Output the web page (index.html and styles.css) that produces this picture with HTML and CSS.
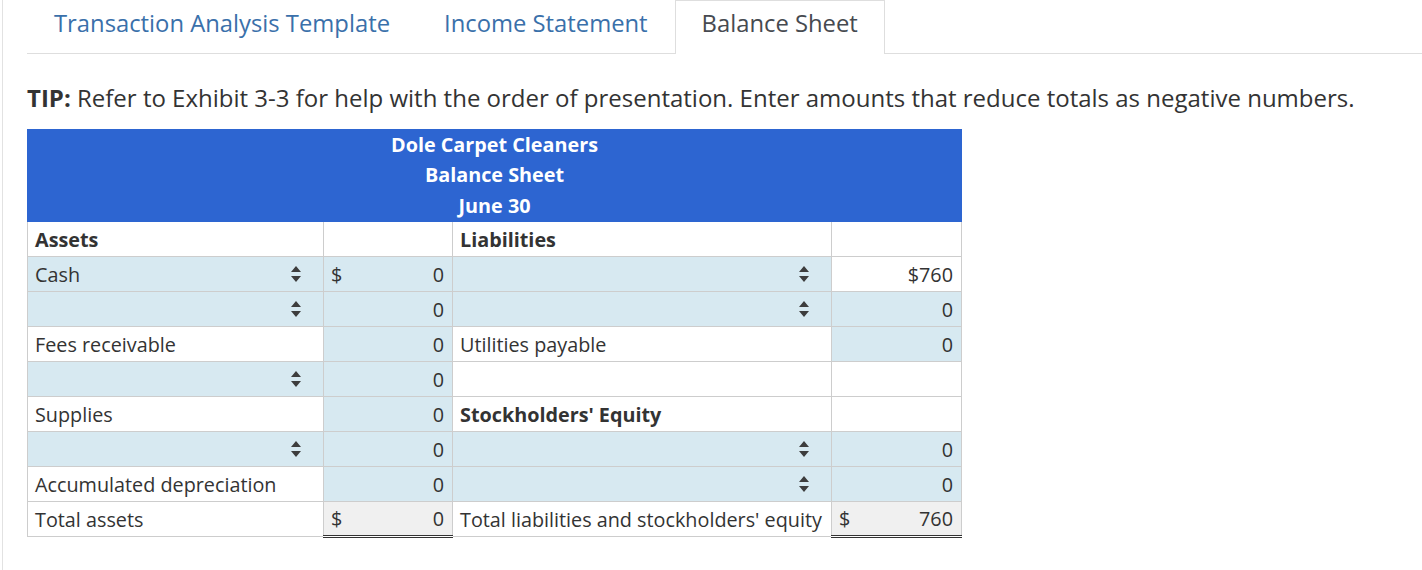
FILE: index.html
```html
<!DOCTYPE html>
<html>
<head>
<meta charset="utf-8">
<link rel="stylesheet" href="styles.css">
</head>
<body>
<div class="page">
  <nav class="tabs">
    <a class="tab">Transaction Analysis Template</a>
    <a class="tab">Income Statement</a>
    <a class="tab active">Balance Sheet</a>
  </nav>
  <p class="tip"><b>TIP:</b> Refer to Exhibit 3-3 for help with the order of presentation. Enter amounts that reduce totals as negative numbers.</p>
  <table class="bs">
    <colgroup>
      <col class="c1"><col class="c2"><col class="c3"><col class="c4">
    </colgroup>
    <tr><th class="head" colspan="4">Dole Carpet Cleaners<br>Balance Sheet<br>June 30</th></tr>
    <tr>
      <td class="lbl b">Assets</td><td></td>
      <td class="lbl b">Liabilities</td><td></td>
    </tr>
    <tr>
      <td class="sel"><span class="stxt">Cash</span><svg class="arr" viewBox="0 0 10 16"><path d="M5 0L10 6H0Z M0 10H10L5 16Z"/></svg></td>
      <td class="inp"><span class="dol">$</span><span>0</span></td>
      <td class="sel"><span class="stxt"></span><svg class="arr" viewBox="0 0 10 16"><path d="M5 0L10 6H0Z M0 10H10L5 16Z"/></svg></td>
      <td class="num">$760</td>
    </tr>
    <tr>
      <td class="sel"><span class="stxt"></span><svg class="arr" viewBox="0 0 10 16"><path d="M5 0L10 6H0Z M0 10H10L5 16Z"/></svg></td>
      <td class="inp"><span></span><span>0</span></td>
      <td class="sel"><span class="stxt"></span><svg class="arr" viewBox="0 0 10 16"><path d="M5 0L10 6H0Z M0 10H10L5 16Z"/></svg></td>
      <td class="inp"><span></span><span>0</span></td>
    </tr>
    <tr>
      <td class="lbl">Fees receivable</td>
      <td class="inp"><span></span><span>0</span></td>
      <td class="lbl">Utilities payable</td>
      <td class="inp"><span></span><span>0</span></td>
    </tr>
    <tr>
      <td class="sel"><span class="stxt"></span><svg class="arr" viewBox="0 0 10 16"><path d="M5 0L10 6H0Z M0 10H10L5 16Z"/></svg></td>
      <td class="inp"><span></span><span>0</span></td>
      <td class="lbl"></td>
      <td></td>
    </tr>
    <tr>
      <td class="lbl">Supplies</td>
      <td class="inp"><span></span><span>0</span></td>
      <td class="lbl b">Stockholders' Equity</td>
      <td></td>
    </tr>
    <tr>
      <td class="sel"><span class="stxt"></span><svg class="arr" viewBox="0 0 10 16"><path d="M5 0L10 6H0Z M0 10H10L5 16Z"/></svg></td>
      <td class="inp"><span></span><span>0</span></td>
      <td class="sel"><span class="stxt"></span><svg class="arr" viewBox="0 0 10 16"><path d="M5 0L10 6H0Z M0 10H10L5 16Z"/></svg></td>
      <td class="inp"><span></span><span>0</span></td>
    </tr>
    <tr>
      <td class="lbl">Accumulated depreciation</td>
      <td class="inp"><span></span><span>0</span></td>
      <td class="sel"><span class="stxt"></span><svg class="arr" viewBox="0 0 10 16"><path d="M5 0L10 6H0Z M0 10H10L5 16Z"/></svg></td>
      <td class="inp"><span></span><span>0</span></td>
    </tr>
    <tr class="total">
      <td class="lbl">Total assets</td>
      <td class="tot"><span class="dol">$</span><span>0</span></td>
      <td class="lbl">Total liabilities and stockholders' equity</td>
      <td class="tot"><span class="dol">$</span><span>760</span></td>
    </tr>
  </table>
</div>
</body>
</html>
```

FILE: styles.css
```css
html, body {
  margin: 0;
  padding: 0;
  background: #fff;
}
body {
  font-family: "Open Sans", "Liberation Sans", sans-serif;
  color: #333;
}
.page {
  margin-left: 2px;
  border-left: 1px solid #e2e2e2;
  min-height: 570px;
  padding-left: 24px;
  box-sizing: border-box;
}
.tabs {
  display: flex;
  border-bottom: 1px solid #dedede;
  height: 53px;
}
.tab {
  display: flex;
  align-items: center;
  padding: 0 26px 10px 26px;
  border: 1px solid transparent;
  border-bottom: none;
  font-size: 23.8px;
  color: #3a70aa;
  margin-bottom: -1px;
}
.tab.active {
  color: #464a50;
  border-color: #dedede;
  background: #fff;
}
.tip {
  margin: 28px 0 0 0;
  font-size: 24px;
  line-height: 32px;
  color: #333;
  white-space: nowrap;
}
.tip b {
  font-weight: 700;
}
.bs {
  margin-top: 15px;
  border-collapse: collapse;
  width: 934px;
  table-layout: fixed;
  font-size: 19.8px;
}
.c1 { width: 296px; }
.c2 { width: 129px; }
.c3 { width: 379px; }
.c4 { width: 130px; }
.head {
  background: #2d65d1;
  color: #fff;
  font-weight: 700;
  font-size: 19.8px;
  line-height: 30.4px;
  padding: 0;
  text-align: center;
  border: 1px solid #2d65d1;
}
.bs td {
  border: 1px solid #cdcdcd;
  height: 35px;
  padding: 0 8px 0 7px;
  box-sizing: border-box;
  white-space: nowrap;
  color: #333;
}
.lbl { text-align: left; }
.b { font-weight: 700; }
.sel {
  background: #d7e9f1;
}
.sel, .inp, .tot {
  position: relative;
}
.sel .stxt {
  display: inline-block;
}
.arr {
  position: absolute;
  right: 22px;
  top: 50%;
  width: 10px;
  height: 16px;
  margin-top: -8px;
  fill: #3d3d3d;
}
.inp {
  background: #d7e9f1;
}
.inp span:last-child, .tot span:last-child {
  float: right;
}
.num {
  text-align: right;
}
.bs td.tot {
  background: #f0f0f0;
  border-top: 1px solid #222;
  border-bottom: 3px double #333;
}
```
